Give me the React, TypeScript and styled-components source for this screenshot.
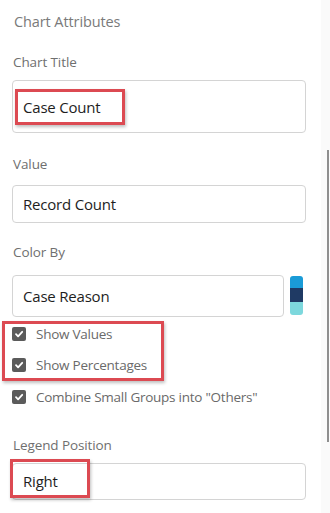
import React from "react";
import styled, { createGlobalStyle } from "styled-components";

const Global = createGlobalStyle`
  html, body { margin: 0; padding: 0; background: #ffffff; }
  body { font-family: "Open Sans", "Noto Sans", sans-serif; }
`;

const Page = styled.div`
  width: 330px;
  height: 513px;
  display: flex;
  overflow: hidden;
  background: #ffffff;
`;

const Content = styled.div`
  flex: 1;
  padding: 0 15px 0 12px;
  display: flex;
  flex-direction: column;
`;

const Heading = styled.div`
  font-size: 14.5px;
  color: #7a7a7a;
  height: 20px;
  line-height: 20px;
  margin: 12px 0 0 2px;
  letter-spacing: -0.1px;
`;

const Label = styled.div<{ $top: number }>`
  font-size: 13.5px;
  color: #6f6f6f;
  height: 20px;
  line-height: 20px;
  margin: ${(p) => p.$top}px 0 0 1px;
  letter-spacing: -0.1px;
`;

const Field = styled.div<{ $h: number; $top: number; $grow?: boolean }>`
  position: relative;
  box-sizing: border-box;
  height: ${(p) => p.$h}px;
  margin-top: ${(p) => p.$top}px;
  border: 1px solid #d4d4d4;
  border-radius: 4px;
  display: flex;
  align-items: center;
  padding-left: 10px;
  font-size: 15px;
  color: #1e1e1e;
  flex: ${(p) => (p.$grow ? 1 : "none")};
  letter-spacing: -0.2px;
`;

const ColorRow = styled.div`
  display: flex;
  align-items: flex-start;
  gap: 6px;
  margin-top: 13px;
  margin-right: 3px;
`;

const Swatch = styled.div`
  width: 13px;
  height: 39px;
  margin-top: 1px;
  border-radius: 3px;
  overflow: hidden;
  display: flex;
  flex-direction: column;
`;

const SwatchPart = styled.div<{ $c: string; $h: number }>`
  background: ${(p) => p.$c};
  height: ${(p) => p.$h}px;
`;

const Checks = styled.div`
  position: relative;
  display: flex;
  flex-direction: column;
  margin-top: 1px;
`;

const CheckRow = styled.div`
  display: flex;
  align-items: center;
  height: 31.5px;
  gap: 10px;
  font-size: 13.5px;
  color: #6a6a6a;
  letter-spacing: -0.25px;
`;

const Box = styled.span`
  width: 14px;
  height: 14px;
  border-radius: 2px;
  background: #5b5b5b;
  display: flex;
  align-items: center;
  justify-content: center;
`;

const Highlight = styled.div<{ $l: number; $t: number; $w: number; $h: number }>`
  position: absolute;
  left: ${(p) => p.$l}px;
  top: ${(p) => p.$t}px;
  width: ${(p) => p.$w}px;
  height: ${(p) => p.$h}px;
  box-sizing: border-box;
  border: 3px solid #dc4a52;
  box-shadow: 1px 2px 3px rgba(0, 0, 0, 0.25);
  pointer-events: none;
`;

const Scroll = styled.div`
  width: 8px;
  background: #fafafa;
  display: flex;
  flex-direction: column;
  align-items: flex-end;
  padding-right: 1px;
`;

const Thumb = styled.div`
  width: 2px;
  height: 292px;
  margin-top: 150px;
  background: #8e8e8e;
`;

const Check = () => (
  <Box>
    <svg width="10" height="10" viewBox="0 0 10 10">
      <path d="M2 5.2 L4.1 7.3 L8.2 2.8" fill="none" stroke="#fff" strokeWidth="1.8" strokeLinecap="round" strokeLinejoin="round" />
    </svg>
  </Box>
);

export default function App() {
  return (
    <>
      <Global />
      <Page>
        <Content>
          <Heading>Chart Attributes</Heading>
          <Label $top={20}>Chart Title</Label>
          <Field $h={53} $top={8}>
            Case Count
            <Highlight $l={2} $t={8} $w={110} $h={36} />
          </Field>
          <Label $top={21}>Value</Label>
          <Field $h={38} $top={11}>Record Count</Field>
          <Label $top={19}>Color By</Label>
          <ColorRow>
            <Field $h={42} $top={0} $grow>Case Reason</Field>
            <Swatch>
              <SwatchPart $c="#1a9bd7" $h={12} />
              <SwatchPart $c="#1f3a64" $h={14} />
              <SwatchPart $c="#7dd8dd" $h={13} />
            </Swatch>
          </ColorRow>
          <Checks>
            <CheckRow><Check />Show Values</CheckRow>
            <CheckRow><Check />Show Percentages</CheckRow>
            <CheckRow><Check />Combine Small Groups into "Others"</CheckRow>
            <Highlight $l={-10} $t={3} $w={162} $h={60} />
          </Checks>
          <Label $top={22}>Legend Position</Label>
          <Field $h={37} $top={8}>
            Right
            <Highlight $l={-3} $t={-5} $w={80} $h={39} />
          </Field>
        </Content>
        <Scroll>
          <Thumb />
        </Scroll>
      </Page>
    </>
  );
}
